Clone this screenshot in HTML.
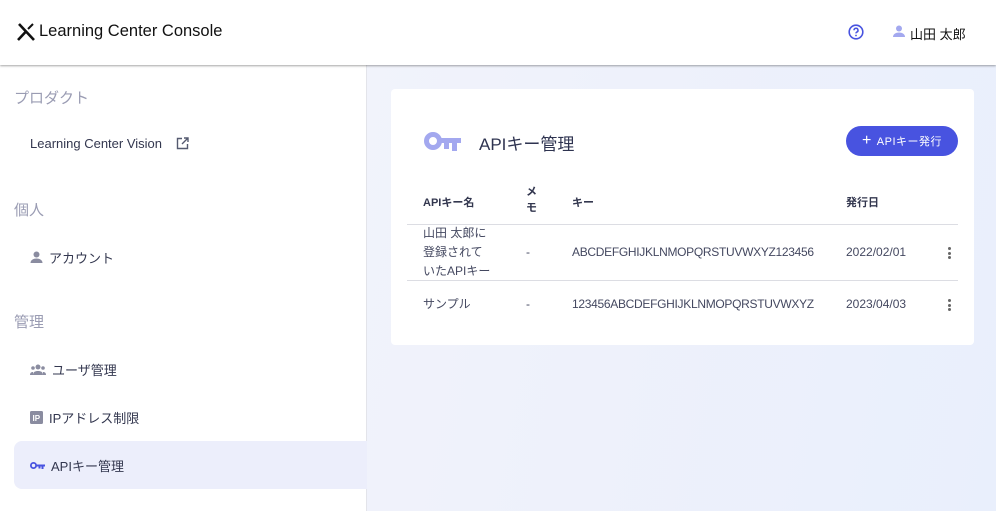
<!DOCTYPE html>
<html><head><meta charset="utf-8"><style>
*{box-sizing:border-box;margin:0;padding:0}
body{width:996px;height:511px;overflow:hidden;font-family:"Liberation Sans","Noto Sans CJK JP",sans-serif;background:linear-gradient(100deg,#f5f6fb 0%,#eef1fb 60%,#e9effc 100%);position:relative;color:#2e3350}
.hdr{position:absolute;left:0;top:0;width:996px;height:65px;background:#fff;box-shadow:0 1px 2px rgba(0,0,0,.35);z-index:2}
.logo{position:absolute;left:17px;top:22px;display:flex;align-items:center;font-size:16.5px;color:#111}
.side{position:absolute;left:0;top:65px;width:367px;height:446px;background:#fff;border-right:1px solid #e3e4ea}
.sec{position:absolute;left:14px;font-size:15px;color:#9a9cb3}
.item{position:absolute;left:30px;font-size:13px;color:#33374f;display:flex;align-items:center;gap:6px}
.card{position:absolute;left:391px;top:89px;width:583px;height:256px;background:#fff;border-radius:4px}
.th{position:absolute;font-size:11px;font-weight:bold;color:#33374f}
.td{position:absolute;font-size:12px;color:#444860;line-height:19px}
.line{position:absolute;left:16px;width:551px;height:1px;background:#dcdde3}
.dots{position:absolute;left:557px;width:3px}
.dots i{display:block;width:3px;height:3px;background:#666;border-radius:50%;margin-bottom:1.5px}
</style></head><body>
<div class="hdr">
 <div class="logo"><svg width="18" height="18" viewBox="0 0 18 18"><path d="M2 1 L17 17 M1 17 L8.5 9" stroke="#111" stroke-width="2.6" fill="none"/><path d="M11 6 L16 1" stroke="#111" stroke-width="2" fill="none"/></svg><span style="margin-left:4px">Learning Center Console</span></div>
 <svg style="position:absolute;left:848px;top:24px" width="16" height="16" viewBox="0 0 16 16"><circle cx="8" cy="8" r="6.8" stroke="#4853e0" stroke-width="1.6" fill="none"/><path d="M6 6.3a2 2 0 1 1 2.6 1.9c-.5.2-.6.6-.6 1.2" stroke="#4853e0" stroke-width="1.5" fill="none"/><circle cx="8" cy="11.5" r=".9" fill="#4853e0"/></svg>
 <svg style="position:absolute;left:893px;top:25px" width="12" height="13" viewBox="0 0 12 13"><circle cx="6" cy="3.5" r="3" fill="#a3a8ef"/><path d="M0 12c0-3 3-4.5 6-4.5s6 1.5 6 4.5z" fill="#a3a8ef"/></svg>
 <div style="position:absolute;left:910px;top:24px;font-size:13px;color:#111">山田 太郎</div>
</div>
<div class="side">
 <div class="sec" style="top:22px">プロダクト</div>
 <div class="item" style="top:71px">Learning Center Vision <svg style="margin-left:8px" width="13" height="13" viewBox="0 0 13 13"><path d="M6 1.5H1.5v10h10V7M8 1h4v4M12 1 6 7" stroke="#555a70" stroke-width="1.4" fill="none"/></svg></div>
 <div class="sec" style="top:134px">個人</div>
 <div class="item" style="top:183px"><svg width="13" height="13" viewBox="0 0 12 13"><circle cx="6" cy="3.5" r="3" fill="#8a8ca0"/><path d="M0 12c0-3 3-4.5 6-4.5s6 1.5 6 4.5z" fill="#8a8ca0"/></svg>アカウント</div>
 <div class="sec" style="top:246px">管理</div>
 <div class="item" style="top:295px"><svg width="16" height="11" viewBox="0 0 16 11"><circle cx="8" cy="3" r="2.5" fill="#8a8ca0"/><circle cx="3" cy="4" r="1.8" fill="#8a8ca0"/><circle cx="13" cy="4" r="1.8" fill="#8a8ca0"/><path d="M3 11c0-3 2-4 5-4s5 1 5 4zM0 11c0-2 1-3 3-3v3zM16 11c0-2-1-3-3-3v3z" fill="#8a8ca0"/></svg>ユーザ管理</div>
 <div class="item" style="top:343px"><svg width="13" height="13" viewBox="0 0 13 13"><rect width="13" height="13" rx="1.5" fill="#8a8ca0"/><text x="2.5" y="10" font-size="8" font-weight="bold" fill="#fff" font-family="Liberation Sans">IP</text></svg>IPアドレス制限</div>
 <div style="position:absolute;left:14px;top:376px;width:353px;height:48px;background:#eceefb;border-radius:8px 0 0 8px"></div>
 <div class="item" style="top:391px"><svg width="15" height="9" viewBox="0 0 15 9"><circle cx="3.5" cy="4.5" r="2.6" stroke="#4853e0" stroke-width="1.8" fill="none"/><path d="M6 3.5h9v2h-1.5v2.5h-2V5.5h-1V7.5h-2V5.5H6z" fill="#4853e0"/></svg>APIキー管理</div>
</div>
<div class="card">
 <svg style="position:absolute;left:33px;top:42px" width="37" height="21" viewBox="0 0 37 21"><circle cx="9" cy="10" r="6.5" stroke="#a3a8ef" stroke-width="5" fill="none"/><path d="M16 7h21v5h-4v8h-5v-8h-3v6h-5v-6h-4z" fill="#a3a8ef"/></svg>
 <div style="position:absolute;left:88px;top:41px;font-size:17px;color:#2e3350">APIキー管理</div>
 <div style="position:absolute;left:455px;top:37px;width:112px;height:30px;background:#4853e0;border-radius:15px;color:#fff;font-size:11px;display:flex;align-items:center;justify-content:center;letter-spacing:.5px"><span style="font-size:16px;margin-right:5px">+</span>APIキー発行</div>
 <div class="th" style="left:32px;top:105px">APIキー名</div>
 <div class="th" style="left:135px;top:95px;line-height:16px">メ<br>モ</div>
 <div class="th" style="left:181px;top:105px">キー</div>
 <div class="th" style="left:455px;top:105px">発行日</div>
 <div class="line" style="top:135px"></div>
 <div class="td" style="left:32px;top:135px">山田 太郎に<br>登録されて<br>いたAPIキー</div>
 <div class="td" style="left:135px;top:154px">-</div>
 <div class="td" style="left:181px;top:154px;letter-spacing:-0.3px">ABCDEFGHIJKLNMOPQRSTUVWXYZ123456</div>
 <div class="td" style="left:455px;top:154px">2022/02/01</div>
 <div class="dots" style="top:158px"><i></i><i></i><i></i></div>
 <div class="line" style="top:191px"></div>
 <div class="td" style="left:32px;top:206px">サンプル</div>
 <div class="td" style="left:135px;top:206px">-</div>
 <div class="td" style="left:181px;top:206px;letter-spacing:-0.3px">123456ABCDEFGHIJKLNMOPQRSTUVWXYZ</div>
 <div class="td" style="left:455px;top:206px">2023/04/03</div>
 <div class="dots" style="top:210px"><i></i><i></i><i></i></div>
</div>
</body></html>
